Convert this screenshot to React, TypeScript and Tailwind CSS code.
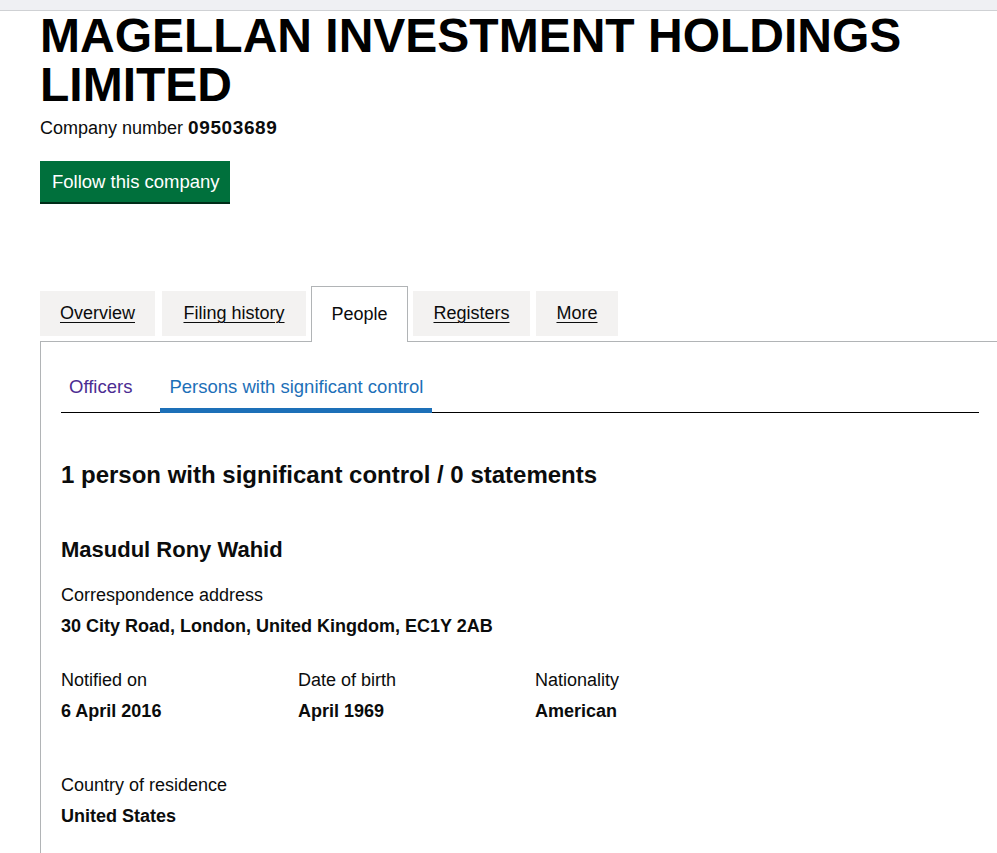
const FONT = { fontFamily: '"Liberation Sans", Arial, sans-serif' };

const tabs = [
  { label: "Overview", active: false, cls: "w-[115px] mr-[7px]" },
  { label: "Filing history", active: false, cls: "w-[144px] mr-[5px]" },
  { label: "People", active: true, cls: "w-[97px] mr-[5px]" },
  { label: "Registers", active: false, cls: "w-[117px] mr-[6px]" },
  { label: "More", active: false, cls: "w-[82px]" },
];

function Field({ label, value }: { label: string; value: string }) {
  return (
    <div>
      <div className="text-[18px] leading-[25px] text-[#0b0c0c]">{label}</div>
      <div className="mt-[6px] text-[18px] leading-[25px] font-bold text-[#0b0c0c]">{value}</div>
    </div>
  );
}

export default function App() {
  return (
    <div className="min-h-screen bg-white text-[#0b0c0c]" style={FONT}>
      <div className="h-[11px] bg-[#eff0f3] border-b border-[#cfd1d4]" />

      <div className="pl-[40px]">
        <h1 className="text-[48px] leading-[49px] font-bold text-black pr-4">
          MAGELLAN INVESTMENT HOLDINGS LIMITED
        </h1>
        <p className="mt-[9px] text-[18px] leading-[20px]">
          Company number <strong className="font-bold text-[19px] tracking-[0.6px]">09503689</strong>
        </p>

        <button className="mt-[23px] whitespace-nowrap bg-[#00703c] text-white text-[18.5px] leading-[20px] pl-[12px] pr-[10px] pt-[11px] pb-[10px] shadow-[0_2px_0_#002d18]">
          Follow this company
        </button>

        <ul className="mt-[84px] flex items-end">
          {tabs.map((t) =>
            t.active ? (
              <li
                key={t.label}
                className={`${t.cls} -mb-px relative z-10 bg-white border border-b-0 border-[#b1b4b6] text-center pt-[18px] pb-[19px] text-[18px] leading-[18px]`}
              >
                {t.label}
              </li>
            ) : (
              <li
                key={t.label}
                className={`${t.cls} mb-[5px] bg-[#f3f2f1] h-[45px] flex items-center justify-center text-[18px]`}
              >
                <a className="underline underline-offset-[3px] decoration-1 text-[#0b0c0c]">{t.label}</a>
              </li>
            )
          )}
        </ul>

        <div className="border-l border-t border-[#b1b4b6] pl-[20px] pr-[18px] pt-[20px] pb-[40px]">
          <ul className="flex border-b border-black text-[18.5px] leading-[25px]">
            <li className="mr-[20px] px-[8px] pt-[12px] pb-[13px] text-[#4c2c92]">Officers</li>
            <li className="-mb-px px-[9px] pt-[12px] pb-[8px] border-b-[5px] border-[#1d70b8] text-[#1d70b8]">
              Persons with significant control
            </li>
          </ul>

          <h2 className="mt-[47px] text-[24px] leading-[30px] font-bold">
            1 person with significant control / 0 statements
          </h2>

          <h3 className="mt-[46px] text-[22px] leading-[28px] font-bold">Masudul Rony Wahid</h3>

          <div className="mt-[19px]">
            <Field label="Correspondence address" value="30 City Road, London, United Kingdom, EC1Y 2AB" />
          </div>

          <div className="mt-[29px] grid grid-cols-[237px_237px_237px]">
            <Field label="Notified on" value="6 April 2016" />
            <Field label="Date of birth" value="April 1969" />
            <Field label="Nationality" value="American" />
          </div>

          <div className="mt-[49px]">
            <Field label="Country of residence" value="United States" />
          </div>
        </div>
      </div>
    </div>
  );
}
